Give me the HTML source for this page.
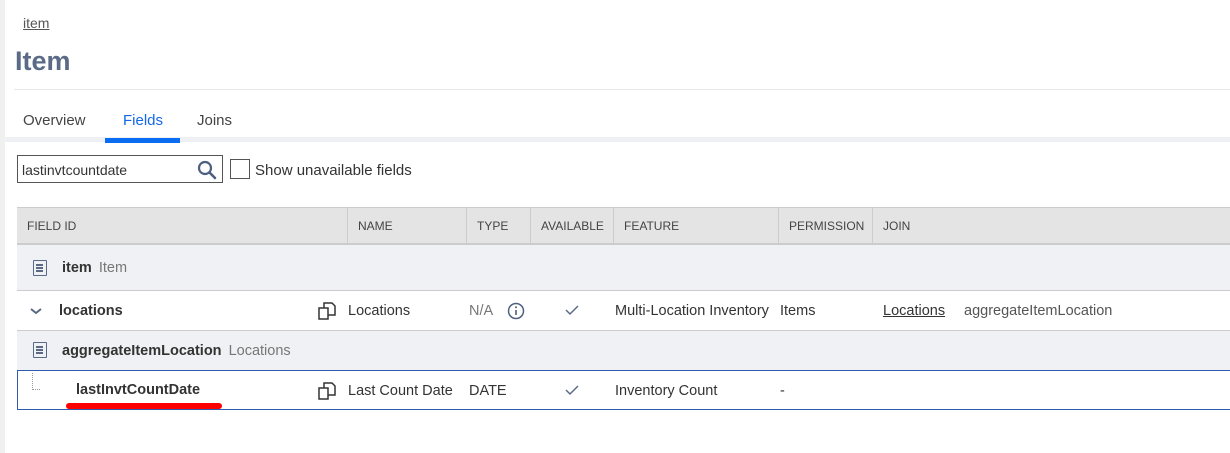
<!DOCTYPE html><html><head><style>
*{box-sizing:border-box;margin:0;padding:0}
body{width:1230px;height:453px;background:#fff;font-family:"Liberation Sans",sans-serif;font-size:14.5px;color:#333;position:relative;overflow:hidden}
.a{position:absolute;white-space:nowrap}
.hd{position:absolute;top:207px;height:38px;background:#e4e4e4;border-top:1px solid #ccc;border-bottom:2px solid #ccc;font-size:12px;color:#444;line-height:37px}
.c{position:absolute;top:0;height:100%;border-left:1px solid #ccc;padding-left:10px}
.row{position:absolute;left:17px;width:1213px}
.doc{position:absolute;width:14px;height:16px;border:1.5px solid #5a6a85;border-radius:1px}
.doc i{position:absolute;left:2px;width:7px;height:1.5px;background:#5a6a85}
.cp{position:absolute;width:18px;height:18px}
</style></head><body>
<div class="a" style="left:0;top:0;width:5px;height:453px;background:#f0f0f0"></div>
<div class="a" style="left:23px;top:15px;font-size:14px;color:#555;text-decoration:underline">item</div>
<div class="a" style="left:15px;top:46px;font-size:27px;font-weight:bold;color:#5b6b87">Item</div>
<div class="a" style="left:14px;top:89px;width:1216px;height:1px;background:#e8e8e8"></div>
<div class="a" style="left:23px;top:112px;font-size:15px;color:#444">Overview</div>
<div class="a" style="left:123px;top:112px;font-size:15px;color:#1467e6">Fields</div>
<div class="a" style="left:197px;top:112px;font-size:15px;color:#444">Joins</div>
<div class="a" style="left:105px;top:138px;width:75px;height:5px;background:#0a6cf0"></div>
<div class="a" style="left:5px;top:137px;width:1225px;height:5px;background:#eef0f3;z-index:-1"></div>
<div class="a" style="left:17px;top:155px;width:206px;height:28px;border:1px solid #555"></div>
<div class="a" style="left:22px;top:162px;font-size:14px;color:#333">lastinvtcountdate</div>
<svg class="a" style="left:197px;top:160px" width="20" height="20" viewBox="0 0 20 20"><circle cx="8" cy="8" r="6" fill="none" stroke="#4d6080" stroke-width="2.2"/><path d="M12.5 12.5L18 18" stroke="#4d6080" stroke-width="2.6" stroke-linecap="round"/></svg>
<div class="a" style="left:230px;top:159px;width:20px;height:20px;border:1px solid #555"></div>
<div class="a" style="left:255px;top:162px;font-size:15px;color:#333">Show unavailable fields</div>
<div class="hd" style="left:17px;width:1213px">
<div class="c" style="left:0;border:none">FIELD ID</div>
<div class="c" style="left:330px">NAME</div>
<div class="c" style="left:449px">TYPE</div>
<div class="c" style="left:513px">AVAILABLE</div>
<div class="c" style="left:596px">FEATURE</div>
<div class="c" style="left:761px">PERMISSION</div>
<div class="c" style="left:855px">JOIN</div>
</div>
<div class="row" style="top:245px;height:46px;background:#f0f1f4;border-bottom:1px solid #ccc"></div>
<div class="doc" style="left:33px;top:260px"><i style="top:3px"></i><i style="top:6px"></i><i style="top:9px"></i></div>
<div class="a" style="left:62px;top:260px"><b>item</b> <span style="color:#777;margin-left:3px">Item</span></div>
<div class="row" style="top:291px;height:40px;background:#fff;border-bottom:1px solid #ccc"></div>
<svg class="a" style="left:29px;top:306px" width="14" height="10"><path d="M2 3l5 4 5-4" fill="none" stroke="#5a6a85" stroke-width="2"/></svg>
<div class="a" style="left:59px;top:303px;font-weight:bold">locations</div>
<svg class="cp" style="left:318px;top:302px" viewBox="0 0 18 18"><path d="M1 6h9v11H1z" fill="#fff" stroke="#333" stroke-width="1.5"/><path d="M6 6V1h8l3 3v9h-7" fill="none" stroke="#333" stroke-width="1.5"/></svg>
<div class="a" style="left:348px;top:303px">Locations</div>
<div class="a" style="left:469px;top:303px;color:#777">N/A</div>
<svg class="a" style="left:507px;top:302px" width="18" height="18"><circle cx="9" cy="9" r="7.5" fill="none" stroke="#4d6080" stroke-width="1.5"/><path d="M9 8v5" stroke="#4d6080" stroke-width="1.6"/><circle cx="9" cy="5.3" r="1" fill="#4d6080"/></svg>
<svg class="a" style="left:565px;top:304px" width="14" height="12"><path d="M1 6l4 4 8-8" fill="none" stroke="#5a6a85" stroke-width="1.5"/></svg>
<div class="a" style="left:615px;top:303px">Multi-Location Inventory</div>
<div class="a" style="left:780px;top:303px">Items</div>
<div class="a" style="left:883px;top:303px;text-decoration:underline">Locations</div>
<div class="a" style="left:964px;top:303px;color:#555">aggregateItemLocation</div>
<div class="row" style="top:331px;height:40px;background:#f0f1f4"></div>
<div class="doc" style="left:33px;top:342px"><i style="top:3px"></i><i style="top:6px"></i><i style="top:9px"></i></div>
<div class="a" style="left:62px;top:343px"><b>aggregateItemLocation</b> <span style="color:#777;margin-left:3px">Locations</span></div>
<div class="row" style="top:370px;height:40px;border:1px solid #2c5bb0;border-right:none;background:#fff"></div>
<div class="a" style="left:32px;top:373px;width:8px;height:17px;border-left:1px dotted #999;border-bottom:1px dotted #999"></div>
<div class="a" style="left:76px;top:382px;font-weight:bold">lastInvtCountDate</div>
<div class="a" style="left:66px;top:403px;width:156px;height:6px;background:#f00;border-radius:3px"></div>
<svg class="cp" style="left:318px;top:382px" viewBox="0 0 18 18"><path d="M1 6h9v11H1z" fill="#fff" stroke="#333" stroke-width="1.5"/><path d="M6 6V1h8l3 3v9h-7" fill="none" stroke="#333" stroke-width="1.5"/></svg>
<div class="a" style="left:348px;top:383px">Last Count Date</div>
<div class="a" style="left:469px;top:383px">DATE</div>
<svg class="a" style="left:565px;top:384px" width="14" height="12"><path d="M1 6l4 4 8-8" fill="none" stroke="#5a6a85" stroke-width="1.5"/></svg>
<div class="a" style="left:615px;top:383px">Inventory Count</div>
<div class="a" style="left:780px;top:383px">-</div>
</body></html>
